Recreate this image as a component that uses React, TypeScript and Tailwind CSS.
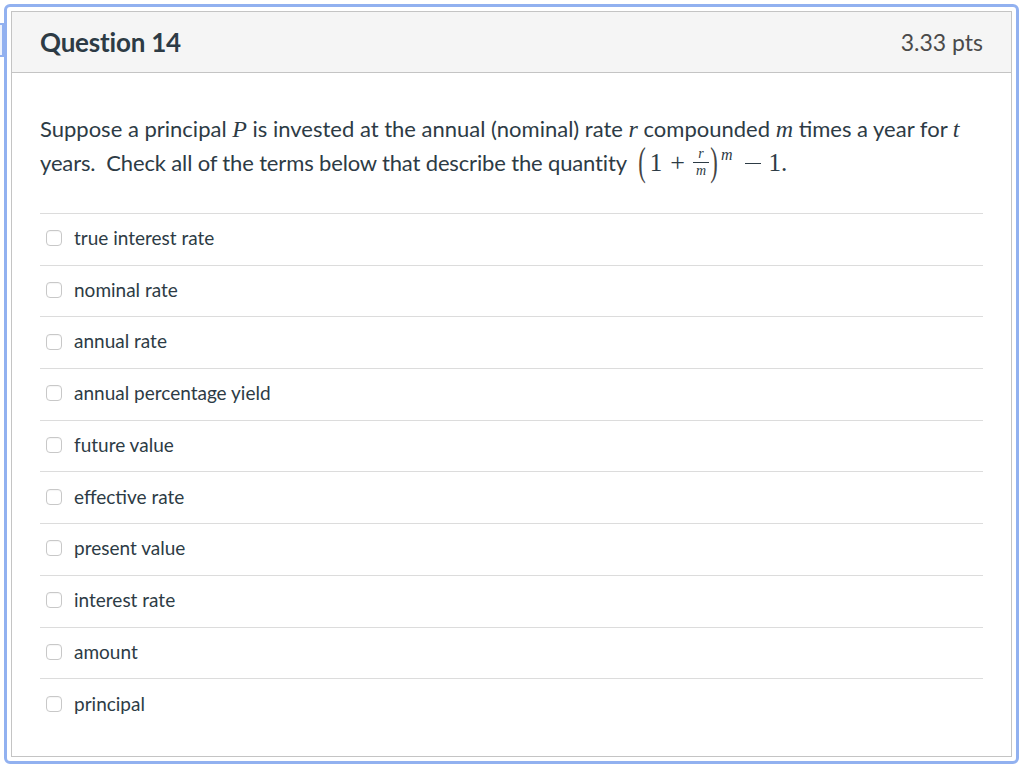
import React from "react";

const answers = [
  "true interest rate",
  "nominal rate",
  "annual rate",
  "annual percentage yield",
  "future value",
  "effective rate",
  "present value",
  "interest rate",
  "amount",
  "principal",
];

const M = ({ children }: { children: React.ReactNode }) => (
  <span className="italic text-[24px] [font-family:'Liberation_Serif',serif]">{children}</span>
);

export default function App() {
  return (
    <div className="relative w-[1024px] h-[772px] bg-white pt-[4px] pl-[4px] [font-family:Lato,'Noto_Sans',sans-serif] text-[#2d3b45]">
      <div className="absolute left-0 top-[23px] w-[4px] h-[34px] border-[2px] border-l-0 border-[#92b1f0] bg-[#eef3fd]" />
      <div className="w-[1015px] h-[760px] border-[3px] border-[#92b1f0] rounded-[6px] p-[4px]">
        <div className="h-full border border-[#c4c4c4] flex flex-col">
          <div className="h-[61px] bg-[#f5f5f5] border-b border-[#c4c4c4] flex items-center justify-between px-[28px]">
            <div className="text-[26px] font-bold text-[#2d3b45] tracking-[-0.2px]">Question 14</div>
            <div className="text-[23px] text-[#4a4a4a]">3.33 pts</div>
          </div>
          <div className="px-[28px] pt-[39px]">
            <div className="text-[22px] leading-[33px] text-[#2d3b45]">
              <div>
                Suppose a principal <M>P</M> is invested at the annual (nominal) rate <M>r</M> compounded <M>m</M> times a year for <M>t</M>
              </div>
              <div className="flex items-center">
                <span className="whitespace-pre tracking-[-0.15px]">years.  Check all of the terms below that describe the quantity </span>
                <span className="inline-flex items-center ml-[5px] [font-family:'Liberation_Serif',serif] text-[25px]">
                  <span className="text-[30px] leading-none scale-y-[1.3] scale-x-75 text-[#444] -translate-y-[1px]">(</span>
                  <span className="ml-[3px]">1</span>
                  <span className="mx-[8px] text-[26px]">+</span>
                  <span className="inline-flex flex-col items-center leading-none text-[14px] italic">
                    <span className="px-[2px]">r</span>
                    <span className="w-[16px] border-t border-[#2d3b45] my-[1px]" />
                    <span>m</span>
                  </span>
                  <span className="text-[30px] leading-none scale-y-[1.3] scale-x-75 text-[#444] -translate-y-[1px]">)</span>
                  <span className="italic text-[16px] self-start -mt-[8px] ml-[2px]">m</span>
                  <span className="ml-[12px] mr-[8px] inline-block w-[16px] border-t-[1.5px] border-[#2d3b45] translate-y-[1px]" />
                  <span>1.</span>
                </span>
              </div>
            </div>
            <div className="mt-[34px] border-t border-[#dcdcdc]">
              {answers.map((a, i) => (
                <div
                  key={a}
                  className={`h-[51.7px] flex items-center pb-[2px] ${i < answers.length - 1 ? "border-b border-[#dcdcdc]" : ""}`}
                >
                  <div className="ml-[6px] w-[16px] h-[16px] rounded-[4px] border border-[#c8c8c8] bg-white shadow-[inset_0_1px_1px_rgba(0,0,0,0.04)]" />
                  <div className="ml-[12px] text-[19px] text-[#2d3b45]">{a}</div>
                </div>
              ))}
            </div>
          </div>
        </div>
      </div>
    </div>
  );
}
